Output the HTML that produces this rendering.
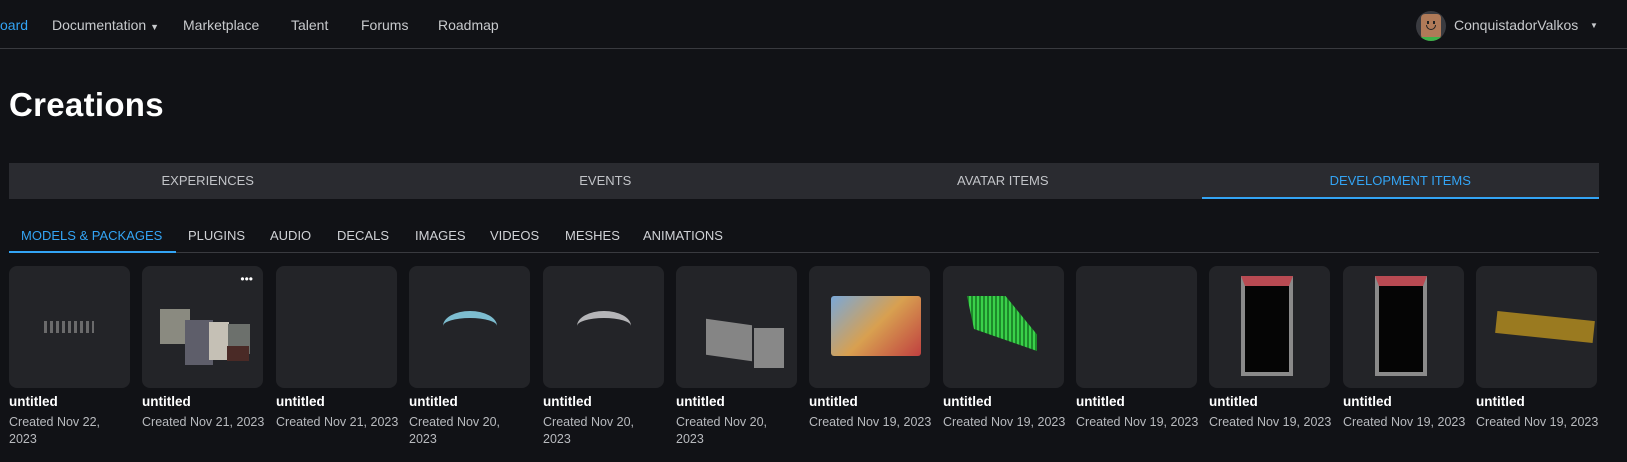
<!DOCTYPE html>
<html><head><meta charset="utf-8"><style>
*{margin:0;padding:0;box-sizing:border-box}
body{width:1627px;height:462px;background:#111216;font-family:"Liberation Sans",sans-serif;color:#d0d2d6;overflow:hidden;position:relative}
.a{position:absolute;white-space:nowrap}
.nav{top:17px;font-size:14px;color:#c8cacd}
.hl{position:absolute;top:48px;left:0;width:1627px;height:1px;background:#393a3f}
.tabs{position:absolute;left:9px;top:163px;width:1590px;height:36px;background:#2a2b30;display:flex}
.tabs div{flex:1;text-align:center;line-height:36px;font-size:13px;color:#c2c4c8}
.tabs .on{color:#33a4f4;border-bottom:2px solid #33a4f4;line-height:36px}
.sub{top:228px;font-size:13px;color:#d0d2d6}
.card{position:absolute;top:266px;width:121px;height:122px;background:#232428;border-radius:8px;overflow:hidden}
.t{position:absolute;top:394px;font-size:13.5px;font-weight:bold;color:#fff}
.d{position:absolute;top:414px;font-size:12.5px;color:#b8babe;width:125px;line-height:17px}
</style></head><body>
<div class="a nav" style="left:0;color:#33a4f4">oard</div>
<div class="a nav" style="left:52px">Documentation <span style="font-size:9px">▼</span></div>
<div class="a nav" style="left:183px">Marketplace</div>
<div class="a nav" style="left:291px">Talent</div>
<div class="a nav" style="left:361px">Forums</div>
<div class="a nav" style="left:438px">Roadmap</div>
<div class="a" style="left:1416px;top:11px;width:30px;height:30px;border-radius:50%;background:#3a3b40;overflow:hidden">
<div style="position:absolute;left:5px;top:3px;width:20px;height:25px;background:#b07a58;border-radius:4px"></div>
<div style="position:absolute;left:4px;top:26px;width:22px;height:6px;background:#3fb14a"></div>
<div style="position:absolute;left:11px;top:10px;width:2px;height:3px;background:#222"></div>
<div style="position:absolute;left:17px;top:10px;width:2px;height:3px;background:#222"></div>
<div style="position:absolute;left:10px;top:14px;width:10px;height:5px;border:1.5px solid #222;border-top:none;border-radius:0 0 6px 6px"></div>
</div>
<div class="a nav" style="left:1454px">ConquistadorValkos</div>
<div class="a nav" style="left:1590px;font-size:8px;top:21px">▼</div>
<div class="hl"></div>
<div class="a" style="left:9px;top:86px;font-size:33px;font-weight:bold;color:#fff;letter-spacing:0.3px">Creations</div>
<div class="tabs"><div>EXPERIENCES</div><div>EVENTS</div><div>AVATAR ITEMS</div><div class="on">DEVELOPMENT ITEMS</div></div>
<div class="a sub" style="left:21px;color:#33a4f4">MODELS &amp; PACKAGES</div>
<div class="a sub" style="left:188px">PLUGINS</div>
<div class="a sub" style="left:270px">AUDIO</div>
<div class="a sub" style="left:337px">DECALS</div>
<div class="a sub" style="left:415px">IMAGES</div>
<div class="a sub" style="left:490px">VIDEOS</div>
<div class="a sub" style="left:565px">MESHES</div>
<div class="a sub" style="left:643px">ANIMATIONS</div>
<div class="a" style="left:9px;top:252px;width:1590px;height:1px;background:#393a3f"></div>
<div class="a" style="left:9px;top:251px;width:167px;height:2px;background:#33a4f4"></div>

<div class="card" style="left:9px"><div style="position:absolute;left:35px;top:55px;width:50px;height:12px;background:repeating-linear-gradient(90deg,#888 0 3px,transparent 3px 6px);opacity:.7"></div></div>
<div class="card" style="left:142px"><div style="position:absolute;right:10px;top:6px;color:#fff;font-size:12px">•••</div>
<div style="position:absolute;left:18px;top:43px;width:30px;height:35px;background:#8a8a80"></div>
<div style="position:absolute;left:43px;top:54px;width:28px;height:45px;background:#5e5e6a"></div>
<div style="position:absolute;left:67px;top:56px;width:20px;height:38px;background:#c5c0b5"></div>
<div style="position:absolute;left:86px;top:58px;width:22px;height:30px;background:#6c706c"></div>
<div style="position:absolute;left:85px;top:80px;width:22px;height:15px;background:#4a2a26"></div></div>
<div class="card" style="left:276px"></div>
<div class="card" style="left:409px"><div style="position:absolute;left:34px;top:45px;width:54px;height:30px;border-top:7px solid #7dbdd0;border-radius:50% 50% 0 0"></div></div>
<div class="card" style="left:543px"><div style="position:absolute;left:34px;top:45px;width:54px;height:30px;border-top:7px solid #b5b5b8;border-radius:50% 50% 0 0"></div></div>
<div class="card" style="left:676px"><div style="position:absolute;left:30px;top:56px;width:46px;height:36px;background:#858585;transform:skewY(8deg)"></div><div style="position:absolute;left:78px;top:62px;width:30px;height:40px;background:#888"></div></div>
<div class="card" style="left:809px"><div style="position:absolute;left:22px;top:30px;width:90px;height:60px;background:linear-gradient(135deg,#7aa8d8,#d8a050 50%,#c04040);border-radius:3px"></div></div>
<div class="card" style="left:943px"><div style="position:absolute;left:24px;top:30px;width:70px;height:55px;background:repeating-linear-gradient(90deg,#1d8a2a 0 2px,#3ad04a 2px 4px);clip-path:polygon(0 0,55% 0,100% 70%,100% 100%,10% 60%)"></div></div>
<div class="card" style="left:1076px"></div>
<div class="card" style="left:1209px"><div style="position:absolute;left:32px;top:10px;width:52px;height:100px;background:#050505;border:4px solid #8a8a8a;border-top:10px solid #b84a52"></div></div>
<div class="card" style="left:1343px"><div style="position:absolute;left:32px;top:10px;width:52px;height:100px;background:#050505;border:4px solid #8a8a8a;border-top:10px solid #b84a52"></div></div>
<div class="card" style="left:1476px"><div style="position:absolute;left:20px;top:50px;width:98px;height:22px;background:#9a7a20;transform:rotate(6deg)"></div></div>

<div class="t" style="left:9px">untitled</div><div class="d" style="left:9px;width:105px;white-space:normal">Created Nov 22, 2023</div>
<div class="t" style="left:142px">untitled</div><div class="d" style="left:142px">Created Nov 21, 2023</div>
<div class="t" style="left:276px">untitled</div><div class="d" style="left:276px">Created Nov 21, 2023</div>
<div class="t" style="left:409px">untitled</div><div class="d" style="left:409px;width:110px">Created Nov 20, 2023</div>
<div class="t" style="left:543px">untitled</div><div class="d" style="left:543px;width:110px">Created Nov 20, 2023</div>
<div class="t" style="left:676px">untitled</div><div class="d" style="left:676px;width:110px">Created Nov 20, 2023</div>
<div class="t" style="left:809px">untitled</div><div class="d" style="left:809px">Created Nov 19, 2023</div>
<div class="t" style="left:943px">untitled</div><div class="d" style="left:943px">Created Nov 19, 2023</div>
<div class="t" style="left:1076px">untitled</div><div class="d" style="left:1076px">Created Nov 19, 2023</div>
<div class="t" style="left:1209px">untitled</div><div class="d" style="left:1209px">Created Nov 19, 2023</div>
<div class="t" style="left:1343px">untitled</div><div class="d" style="left:1343px">Created Nov 19, 2023</div>
<div class="t" style="left:1476px">untitled</div><div class="d" style="left:1476px">Created Nov 19, 2023</div>
</body></html>
